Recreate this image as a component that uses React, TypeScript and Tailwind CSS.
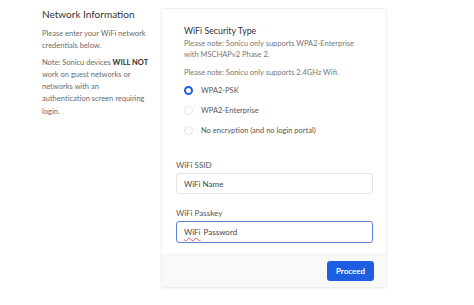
export default function App() {
  const radios = [
    { label: "WPA2-PSK", checked: true },
    { label: "WPA2-Enterprise", checked: false },
    { label: "No encryption (and no login portal)", checked: false },
  ];

  return (
    <div className="w-[474px] h-[305px] bg-white font-['Lato',sans-serif] text-[#555] flex pl-[42px] pt-[6px]">
      {/* Left: info */}
      <div className="w-[112px] pt-[1px]">
        <h2 className="text-[10px] leading-[14px] text-[#333]">Network Information</h2>
        <p className="mt-[7px] w-[108px] text-[7.5px] leading-[12.3px] text-[#6b6b6b]">
          Please enter your WiFi network credentials below.
        </p>
        <p className="mt-[4px] w-[108px] text-[7.5px] leading-[12.3px] text-[#6b6b6b]">
          Note: Sonicu devices <b className="text-[#333]">WILL NOT</b> work on guest networks or networks with an
          <br />
          authentication screen requiring login.
        </p>
      </div>

      {/* Right: card */}
      <div className="ml-[7px] w-[226px] h-[280px] mt-[2px] bg-white border border-[#efefef] rounded-[3px] shadow-[0_1px_2px_rgba(0,0,0,0.05)] flex flex-col">
        <div className="flex-1 pl-[14px] pr-[13px] pt-[16px]">
          <div className="pl-[8px] pr-[9px]">
            <h3 className="text-[8.8px] leading-[12px] text-[#333]">WiFi Security Type</h3>
            <p className="mt-[1px] text-[7.5px] leading-[11px] text-[#777]">
              Please note: Sonicu only supports WPA2-Enterprise with MSCHAPv2 Phase 2.
            </p>
            <p className="mt-[7px] text-[7.5px] leading-[11px] text-[#777]">
              Please note: Sonicu only supports 2.4GHz Wifi.
            </p>
            <div className="mt-[7px] flex flex-col gap-[9px]">
              {radios.map((r) => (
                <div key={r.label} className="flex items-center gap-[8px] h-[11px]">
                  {r.checked ? (
                    <span className="w-[9px] h-[9px] rounded-full border-[2.5px] border-[#1d5fe0] bg-white" />
                  ) : (
                    <span className="w-[9px] h-[9px] rounded-full border border-[#e2e2e2] bg-white" />
                  )}
                  <span className="text-[7.5px] leading-[11px] text-[#555]">{r.label}</span>
                </div>
              ))}
            </div>
          </div>

          <div className="mt-[24px]">
            <label className="block text-[8px] leading-[10px] text-[#555]">WiFi SSID</label>
            <div className="mt-[3px] h-[21px] rounded-[3px] border border-[#e3e3e3] flex items-center px-[7px] text-[8px] text-[#444]">
              WiFi Name
            </div>
          </div>

          <div className="mt-[14px]">
            <label className="block text-[8px] leading-[10px] text-[#555]">WiFi Passkey</label>
            <div className="mt-[3px] h-[22px] rounded-[3px] border-[1.5px] border-[#5b82d6] flex items-center px-[7px] text-[8px] text-[#444]">
              <span className="underline decoration-wavy decoration-[#e05a5a] decoration-[0.5px] underline-offset-2">WiFi</span>
              <span className="ml-[3px]">Password</span>
            </div>
          </div>
        </div>

        <div className="h-[33px] bg-[#f9f9fa] border-t border-[#f2f2f2] flex items-center justify-end px-[12px] rounded-b-[3px]">
          <button className="w-[47px] h-[20px] rounded-[3px] bg-[#1d5fe0] text-white text-[8px] font-bold">
            Proceed
          </button>
        </div>
      </div>
    </div>
  );
}
